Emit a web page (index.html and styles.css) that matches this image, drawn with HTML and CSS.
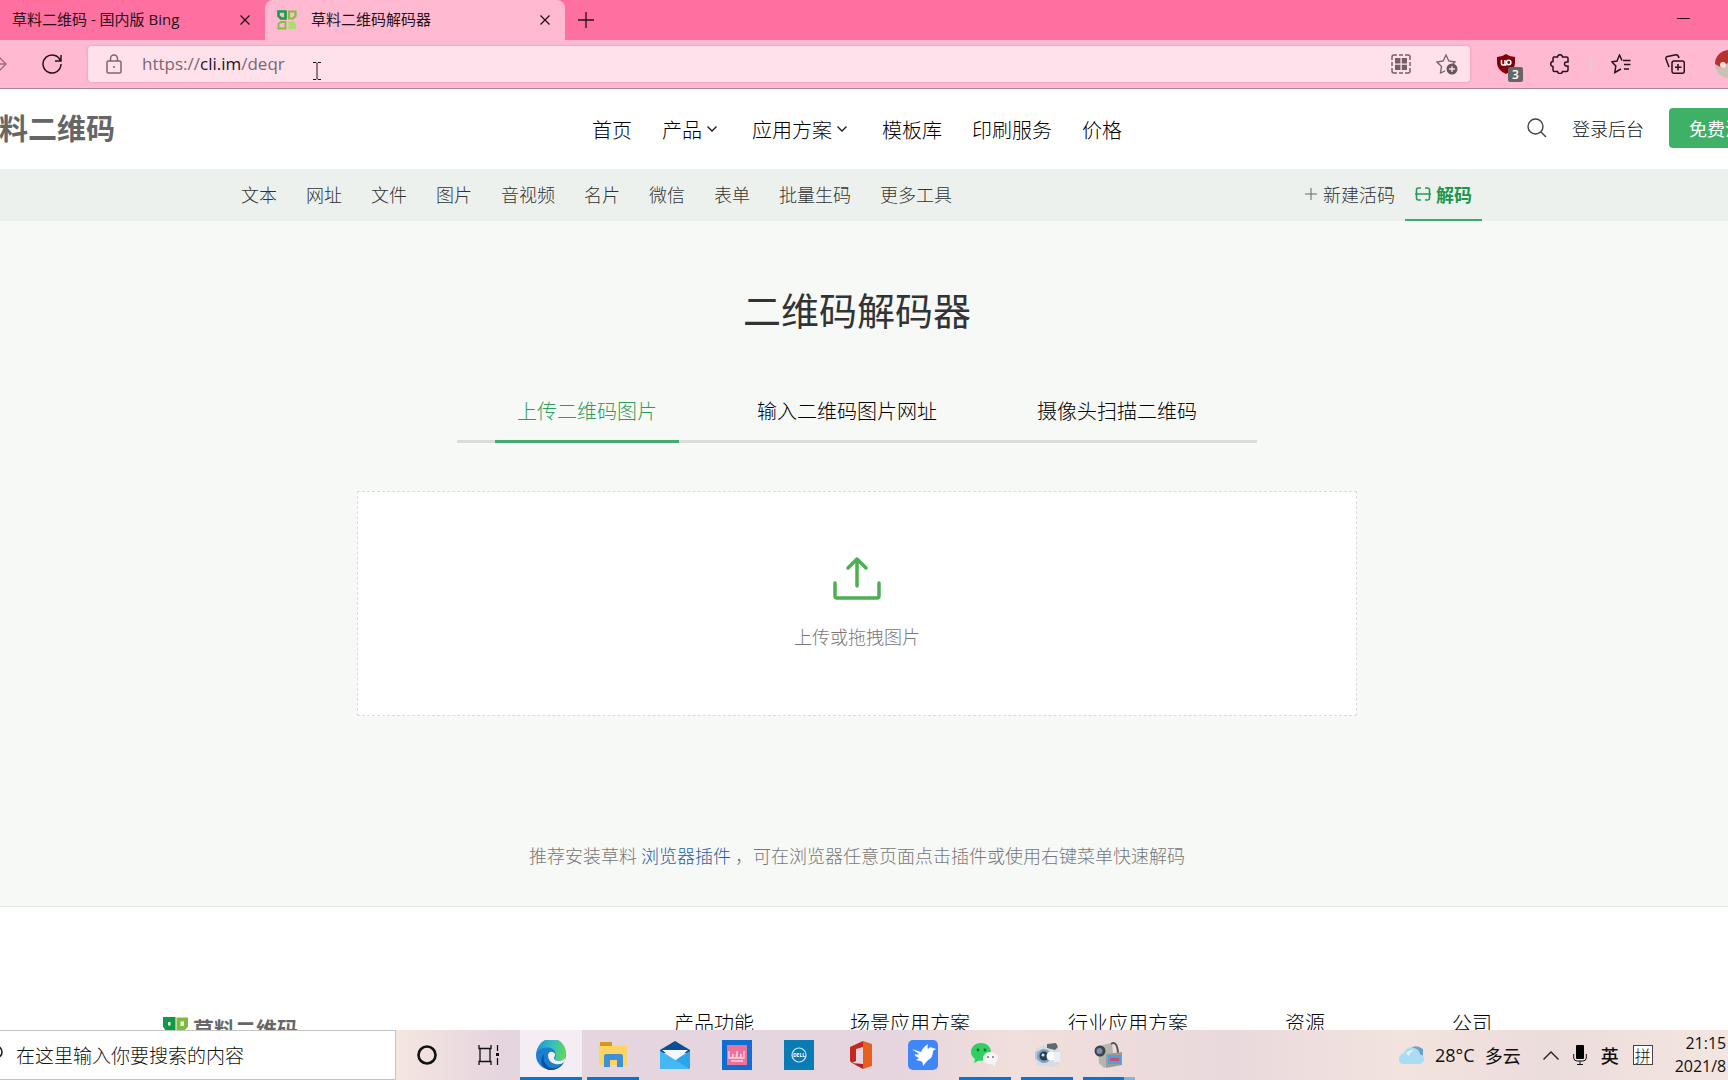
FILE: index.html
```
<!DOCTYPE html>
<html lang="zh-CN">
  <head>
    <meta charset="UTF-8" />
    <meta name="viewport" content="width=device-width, initial-scale=1.0" />
    <title>草料二维码解码器</title>
    <link rel="stylesheet" href="styles.css">
  </head>
  <body>
    <div class="tab-strip">
      <div class="tab">
        <span class="tab-title">草料二维码 - 国内版 Bing</span>
        <button class="icon-button tab-close" aria-label="关闭">
          <svg width="10" height="10" viewBox="0 0 10 10" stroke-width="1.300"><path d="M0.5 0.5L9.5 9.5M9.5 0.5L0.5 9.5" /></svg>
        </button>
      </div>
      <div class="tab active">
        <svg class="favicon" width="20" height="20" viewBox="0 0 20 20">
          <path d="M1.5 1.5H8.5V8.5H4L1.500 6Z" stroke="#149c46" stroke-width="2.600" />
          <path d="M12 1.500H18.500V6L16 8.500H12Z" stroke="#7fc241" stroke-width="2.200" />
          <path d="M4 12H8.500V18.500H1.500V14Z" stroke="#7fc241" stroke-width="1.800" />
          <path d="M11.500 11.500H17L19 14V19H11.500Z" fill="#a6e06a" stroke="none" />
        </svg>
        <span class="tab-title">草料二维码解码器</span>
        <button class="icon-button tab-close" aria-label="关闭">
          <svg width="10" height="10" viewBox="0 0 10 10" stroke-width="1.300"><path d="M0.5 0.5L9.5 9.5M9.5 0.5L0.5 9.5" /></svg>
        </button>
      </div>
      <button class="icon-button new-tab" aria-label="新建标签页">
        <svg width="18" height="18" viewBox="0 0 18 18" stroke-width="1.300"><path d="M9 1V17M1 9H17" /></svg>
      </button>
      <button class="icon-button minimize" aria-label="最小化">
        <svg width="14" height="14" viewBox="0 0 14 14"><path d="M0 7.500H13" /></svg>
      </button>
    </div>

    <div class="toolbar">
      <button class="icon-button forward" aria-label="前进">
        <svg width="20" height="20" viewBox="0 0 20 20" stroke="#a06a80" stroke-width="1.300"><path d="M1 10H18M11 3L18 10L11 17" /></svg>
      </button>
      <button class="icon-button reload" aria-label="刷新">
        <svg width="22" height="22" viewBox="0 0 22 22" stroke-width="1.500"><path d="M19.500 8A9 9 0 1 0 20 11M20 2V8H14" /></svg>
      </button>
      <div class="address-bar">
        <svg width="18" height="20" viewBox="0 0 18 20" stroke="#7d6670" stroke-width="1.500">
          <rect x="2" y="7" width="14" height="12" rx="1.500" />
          <path d="M5.500 7V4.500A3.500 3.500 0 0 1 12.500 4.500V7" />
          <circle cx="9" cy="13" r="1" fill="#7d6670" stroke="none" />
        </svg>
        <span class="url">https://<b>cli.im</b>/deqr</span>
        <button class="icon-button" aria-label="生成二维码">
          <svg width="20" height="20" viewBox="0 0 20 20" stroke="#756068" stroke-width="1.500">
            <path d="M1 6V3Q1 1 3 1H6M8 1H12M14 1H17Q19 1 19 3V6M19 8V12M19 14V17Q19 19 17 19H14M12 19H8M6 19H3Q1 19 1 17V14M1 12V8" />
            <path d="M4 4H9.400V9.400H4ZM10.800 4H16V9.400H10.800ZM4 10.800H9.400V16H4ZM10.800 10.800H16V16H10.800Z" fill="#756068" stroke="none" />
          </svg>
        </button>
        <button class="icon-button" aria-label="添加到收藏夹">
          <svg width="22" height="22" viewBox="0 0 22 22" stroke="#756068" stroke-width="1.300">
            <path d="M9 18L4.500 20L5.500 13.500L1 9L7.200 8L10 2L12.800 8L19 9L17 11" />
            <circle cx="16" cy="16" r="5.500" fill="#65555c" stroke="none" />
            <path d="M16 13V19M13 16H19" stroke="#ffe1eb" />
          </svg>
        </button>
      </div>
      <div class="extensions">
        <button class="icon-button ublock" aria-label="uBlock">
          <svg width="18" height="20" viewBox="0 0 18 20">
            <path d="M9 0Q13 3 18 3V9Q18 16 9 20Q0 16 0 9V3Q5 3 9 0Z" fill="#80000b" stroke="none" />
            <path d="M4.500 6V9.500Q4.500 11 6 11H8V6M8 11H9.500" stroke="#fff" stroke-width="1.500" />
            <circle cx="11.700" cy="8.500" r="2.200" stroke="#fff" stroke-width="1.500" />
          </svg>
          <span class="badge">3</span>
        </button>
        <button class="icon-button" aria-label="扩展">
          <svg width="20" height="20" viewBox="0 0 20 20" stroke-width="1.500">
            <path d="M4 3H7.500Q7.500 0.700 10 0.700T12.500 3H16.500Q18 3 18 4.500V8Q14.500 7.500 14.500 10T18 12V16Q18 17.500 16.500 17.500H12.500Q12.500 19.500 10 19.500T7.500 17.500H4.500Q3 17.500 3 16V12.500Q0.700 12.500 0.700 10T3 7.500V4.500Q3 3 4 3Z" />
          </svg>
        </button>
        <span class="divider"></span>
        <button class="icon-button" aria-label="收藏夹">
          <svg width="20" height="20" viewBox="0 0 20 20" stroke-width="1.500">
            <path d="M13 15H18M13 10.500H19.500M12 6.500H19.500M11 6.500L8.500 1L6 7L0.800 7.800L4.800 12L3.800 18.500L10 15" />
          </svg>
        </button>
        <button class="icon-button" aria-label="集锦">
          <svg width="20" height="20" viewBox="0 0 20 20" stroke-width="1.500">
            <rect x="7" y="7" width="12.300" height="12.300" rx="2" />
            <path d="M13 10V16.500M10 13.200H16.500M4 13L1 5Q0.500 3 2.500 2.500L11 0.800Q13 0.500 14 4" />
          </svg>
        </button>
        <button class="icon-button" aria-label="个人资料">
          <svg width="28" height="28" viewBox="0 0 28 28" stroke="none">
            <circle cx="14" cy="14" r="14" fill="#c9c1b5" />
            <path d="M0 14A14 14 0 0 1 14 0V12L7 18Z" fill="#b5322f" />
            <circle cx="8" cy="15" r="3" fill="#f5dfd5" />
          </svg>
        </button>
      </div>
      <svg class="text-cursor" width="8" height="18" viewBox="0 0 8 18"><path d="M0 0.500H3L4 1.500L5 0.500H8M4 1.500V16.500M0 17.500H3L4 16.500L5 17.500H8" /></svg>
    </div>

    <div class="page">
      <header class="site-header">
        <div class="logo">
          <svg width="34" height="34" viewBox="0 0 20 20">
            <path d="M1.500 1.500H8.500V8.500H1.500Z" stroke="#149c46" stroke-width="2.600" />
            <path d="M12 1.500H18.500V8.500H12ZM1.500 12H8.500V18.500H1.500Z" stroke="#7fc241" stroke-width="2.200" />
          </svg>
          <span>草料二维码</span>
        </div>
        <nav class="main-nav">
          <a href="#">首页</a>
          <a href="#">产品<svg width="10" height="6" viewBox="0 0 10 6" stroke-width="1.300"><path d="M0.500 0.500L5 5L9.500 0.500" /></svg></a>
          <a href="#">应用方案<svg width="10" height="6" viewBox="0 0 10 6" stroke-width="1.300"><path d="M0.500 0.500L5 5L9.500 0.500" /></svg></a>
          <a href="#">模板库</a>
          <a href="#">印刷服务</a>
          <a href="#">价格</a>
        </nav>
        <div class="account">
          <button class="icon-button" aria-label="搜索">
            <svg width="20" height="20" viewBox="0 0 20 20" stroke="#444" stroke-width="1.400"><circle cx="8.500" cy="8.500" r="7.500" /><path d="M14 14L19 19" /></svg>
          </button>
          <a href="#">登录后台</a>
          <button class="register">免费注册</button>
        </div>
      </header>

      <div class="tool-bar">
        <div class="tool-inner">
          <nav class="tool-nav">
            <a href="#">文本</a>
            <a href="#">网址</a>
            <a href="#">文件</a>
            <a href="#">图片</a>
            <a href="#">音视频</a>
            <a href="#">名片</a>
            <a href="#">微信</a>
            <a href="#">表单</a>
            <a href="#">批量生码</a>
            <a href="#">更多工具</a>
          </nav>
          <div class="tool-actions">
            <a href="#" class="new-code">
              <svg width="12" height="12" viewBox="0 0 12 12" stroke="#666"><path d="M6 0V12M0 6H12" /></svg>
              新建活码
            </a>
            <a href="#" class="decode">
              <svg width="16" height="14" viewBox="0 0 16 14" stroke="#279a55" stroke-width="1.600">
                <path d="M6 1H3.500Q1.500 1 1.500 3V5M10 1H12.500Q14.500 1 14.500 3V5M1.500 5V11Q1.500 13 3.500 13H6M14.500 5V11Q14.500 13 12.500 13H10M0 7H16" />
              </svg>
              解码
            </a>
          </div>
        </div>
      </div>

      <main class="decoder">
        <h1>二维码解码器</h1>
        <div class="mode-tabs">
          <button class="mode selected">上传二维码图片</button>
          <button class="mode">输入二维码图片网址</button>
          <button class="mode">摄像头扫描二维码</button>
        </div>
        <button class="upload">
          <svg width="48" height="44" viewBox="0 0 48 44" stroke="#4caf50" stroke-width="3.500">
            <path d="M2 27V40Q2 42 4 42H44Q46 42 46 40V27M24 30V3M15 12L24 3L33 12" stroke-linecap="round" stroke-linejoin="round" />
          </svg>
          <span>上传或拖拽图片</span>
        </button>
        <p class="hint">推荐安装草料 <a href="#">浏览器插件</a> ，可在浏览器任意页面点击插件或使用右键菜单快速解码</p>
      </main>

      <footer class="site-footer">
        <div class="footer-inner">
          <div class="footer-logo">
            <svg width="26" height="26" viewBox="0 0 26 26">
              <path d="M2.500 2.500H10V11H4L2.500 9Z" stroke="#0f9b45" stroke-width="5" />
              <path d="M15.500 2.500H23V9L21 11H15.500Z" stroke="#7dbb3c" stroke-width="4" />
            </svg>
            <span>草料二维码</span>
          </div>
          <span>产品功能</span>
          <span>场景应用方案</span>
          <span>行业应用方案</span>
          <span>资源</span>
          <span>公司</span>
        </div>
      </footer>
    </div>

    <div class="taskbar">
      <div class="search-box">
        <svg width="18" height="22" viewBox="0 0 18 22" stroke="#222" stroke-width="1.600"><circle cx="10" cy="8" r="6" /><path d="M6 12L1 18" /></svg>
        <input type="text" aria-label="搜索" placeholder="在这里输入你要搜索的内容" />
      </div>
      <button class="task" aria-label="Cortana">
        <svg width="22" height="22" viewBox="0 0 22 22" stroke="#111" stroke-width="2.600"><circle cx="11" cy="11" r="8.500" /></svg>
      </button>
      <button class="task" aria-label="任务视图">
        <svg width="22" height="20" viewBox="0 0 22 20" stroke="#111" stroke-width="1.300"><path d="M1 0V3.500H13V0M1 20V16.500H13V20M2 3.500V16.500M12 3.500V16.500M19.500 0V6M19.500 13V20" /><path d="M18 8H21V11H18Z" fill="#111" stroke="none" /></svg>
      </button>
      <button class="task current" aria-label="Edge">
        <svg width="30" height="30" viewBox="0 0 30 30" stroke="none">
          <defs>
            <linearGradient id="edge-top" x1="0" y1="0.300" x2="1" y2="0.500">
              <stop offset="0" stop-color="#2295cf" />
              <stop offset="0.500" stop-color="#34bfc4" />
              <stop offset="1" stop-color="#62d858" />
            </linearGradient>
          </defs>
          <circle cx="15" cy="15" r="15" fill="#1a7fd0" />
          <path d="M8 14Q6 23 13 27Q20 31 28 22A15 15 0 0 1 12 29.700Q1 24 8 14Z" fill="#0d4f98" />
          <path d="M1 12A14.500 14.500 0 0 1 30 14Q30 21 23 21L19 20Q22 9 13 7.500Q5 7 1 12Z" fill="url(#edge-top)" />
          <path d="M12 15Q13 11 16.500 12Q20 13 19 16Q17 18 19 20Q22 22 27 20L30 17L28.500 22Q25 25 19 24Q12 22 12 15Z" fill="#f4eef4" />
        </svg>
      </button>
      <button class="task running" aria-label="文件资源管理器">
        <svg width="28" height="26" viewBox="0 0 28 26" stroke="none">
          <path d="M0 3H12L14 4H28V23H0Z" fill="#fcd462" />
          <path d="M1 0H13V4H1Z" fill="#d79a16" />
          <path d="M5 14Q5 12 7 12H22Q24 12 24 14V25H18V18H11V25H5Z" fill="#3f90d6" />
        </svg>
      </button>
      <button class="task" aria-label="邮件">
        <svg width="30" height="28" viewBox="0 0 30 28" stroke="none">
          <path d="M0 9L15 0L30 9V12H0Z" fill="#0a4f96" />
          <path d="M3 9H27L15 21Z" fill="#f5f7fa" />
          <path d="M0 10L15 19L30 10V28H0Z" fill="#2ba5ea" />
          <path d="M2 9H28L16 19Z" fill="#f5f7fa" />
          <path d="M0 10L15 19L30 28H0Z" fill="#45b8f3" />
        </svg>
      </button>
      <button class="task" aria-label="应用">
        <svg width="30" height="30" viewBox="0 0 30 30" stroke="none">
          <path d="M0 0H30V30H0Z" fill="#0e6fd0" />
          <path d="M5 5H25V25H5Z" fill="#ee6f9a" />
          <path d="M7 11V18H10L11 14V18H14L15 11V18H18L19 14V18H22V11M9 21H21" stroke="#ffd3e0" stroke-width="1.300" />
        </svg>
      </button>
      <button class="task" aria-label="Dell">
        <svg width="30" height="30" viewBox="0 0 30 30" stroke="none">
          <path d="M0 0H30V30H0Z" fill="#0a7bb5" />
          <circle cx="15" cy="15" r="7" stroke="#d5eaf5" stroke-width="1.200" />
          <text class="dell-name" x="15" y="17" text-anchor="middle">DELL</text>
        </svg>
      </button>
      <button class="task" aria-label="Office">
        <svg width="24" height="28" viewBox="0 0 24 28" stroke="none">
          <path d="M14 0L23 3V25L14 28Z" fill="#e8601f" />
          <path d="M14 0V6L7 8V20L3 22L1 20V6Z" fill="#c02a1e" />
          <path d="M3 22L14 23V28Z" fill="#b3202a" />
        </svg>
      </button>
      <button class="task" aria-label="飞鸟">
        <svg width="30" height="30" viewBox="0 0 30 30" stroke="none">
          <rect width="30" height="30" rx="5" fill="#3f86fa" />
          <path d="M4 9L13 12Q15 7 20 4Q19 8 20 9Q22 6 25 8L28 9L25 11Q25 18 20 20L15 26Q15 21 12 21L8 20Q10 19 11 18Q6 16 7 14Q10 15 11 14Z" fill="#fff" />
        </svg>
      </button>
      <button class="task running" aria-label="微信">
        <svg width="30" height="26" viewBox="0 0 30 26" stroke="none">
          <path d="M11 1C5 1 1 5 1 10Q1 14 5 17L4 21L9 18.500C16 20 21 15 21 10S17 1 11 1Z" fill="#2fcf62" />
          <circle cx="8" cy="8" r="1.400" fill="#176b33" /><circle cx="15" cy="8" r="1.400" fill="#176b33" />
          <path d="M20 10C16 10 13 13 13 16.500S17 23 22 22L25 24V21Q28 19 28 16C28 13 24 10 20 10Z" fill="#f5f5f5" />
          <circle cx="18" cy="15" r="1" fill="#777" /><circle cx="23" cy="15" r="1" fill="#777" />
        </svg>
      </button>
      <button class="task running" aria-label="照相机">
        <svg width="28" height="28" viewBox="0 0 28 28" stroke="none">
          <path d="M3 8L10 4H24L26 9V23L20 26L4 24Z" fill="#d3dce3" />
          <path d="M14 3L23 2L25 6L22 9L14 7Z" fill="#60686f" />
          <path d="M2 11L5 9V20L2 18Z" fill="#b7c7d6" />
          <circle cx="11" cy="15" r="7" fill="#7f9fc0" /><circle cx="11" cy="15" r="4.500" fill="#2c3e52" />
          <circle cx="10" cy="14" r="1.500" fill="#dce9f5" />
          <circle cx="18" cy="15" r="4.500" fill="#fff" />
          <path d="M21 11H27V21H21Z" fill="#edf0f2" />
        </svg>
      </button>
      <button class="task running stacked" aria-label="摄像机">
        <svg width="30" height="28" viewBox="0 0 30 28" stroke="none">
          <path d="M4 5L18 2L20 22L10 27L5 22Z" fill="#b5b5b0" />
          <path d="M17 3Q23-1 24 12" stroke="#565656" stroke-width="2" />
          <path d="M12 13L28 11V24L12 27Z" fill="#9c9c97" />
          <circle cx="6" cy="10" r="5.500" fill="#404348" /><circle cx="5.500" cy="10" r="3" fill="#7592b5" />
          <path d="M14 14H27V23H14Z" fill="#4d9fe0" />
          <path d="M16 17H25V20H16Z" fill="#c9506e" />
        </svg>
      </button>

      <div class="tray">
        <div class="weather">
          <svg width="27" height="20" viewBox="0 0 27 20" stroke="none">
            <path d="M13 3Q18-1 25 4V14H15Z" fill="#6c9fcb" />
            <path d="M6 19Q0 19 1 13Q2 9 6 8Q9 1 16 3Q21 4 22 9Q27 11 26 15Q25 19 21 19Z" fill="#a9dcf5" />
            <path d="M8 8Q12 4 17 6Q12 6 11 11Z" fill="#e1f4fc" />
          </svg>
          <span>28°C</span>
          <span>多云</span>
        </div>
        <svg width="16" height="9" viewBox="0 0 16 9" stroke="#222" stroke-width="1.400"><path d="M0.500 8.500L8 1L15.500 8.500" /></svg>
        <svg width="14" height="20" viewBox="0 0 14 20" stroke="#111"><rect x="3" y="0" width="8" height="14" rx="1" fill="#000" stroke="none" /><path d="M0.700 9V13Q1 16 4 16H10Q13 16 13.300 13V9M7 16V19.500M4 19.500H10" /></svg>
        <span class="ime-lang">英</span>
        <span class="ime-mode">拼</span>
        <div class="clock">
          <span>21:15</span>
          <span>2021/8</span>
        </div>
      </div>
    </div>
  </body>
</html>
```
FILE: styles.css
```
* {
  box-sizing: border-box;
}
body {
  margin: 0;
  height: 100vh;
  display: flex;
  flex-direction: column;
  overflow: hidden;
  font-family: "Noto Sans CJK SC", sans-serif;
  font-weight: 300;
  font-size: 18px;
  color: #333;
  background-color: #fff;
  /* defaults for the inline icons */
  fill: none;
  stroke: #24121a;
}
a {
  color: inherit;
  text-decoration: none;
}
svg {
  display: block;
  flex: none;
}
button {
  font: inherit;
  color: inherit;
  padding: 0;
  border: none;
  background: none;
  cursor: pointer;
}
.icon-button {
  display: flex;
  align-items: center;
  justify-content: center;
}

/* browser tabs */
.tab-strip {
  flex: none;
  display: flex;
  height: 40px;
  background-color: #fe709f;
}
.tab {
  display: flex;
  align-items: center;
  width: 265px;
  padding: 0 10px 0 12px;
  font-family: "Open Sans", "Noto Sans CJK SC", sans-serif;
  font-size: 15px;
  font-weight: 400;
  color: #24121a;
}
.tab-title {
  padding-bottom: 3px;
}
.tab.active {
  width: 300px;
  background-color: #ffb9d1;
  border-radius: 8px 8px 0 0;
}
.favicon {
  margin-right: 14px;
}
.tab-close {
  width: 20px;
  height: 20px;
  margin-left: auto;
}
.new-tab {
  width: 42px;
}
.minimize {
  width: 60px;
  margin: 0 14px 4px auto;
}

/* address row */
.toolbar {
  flex: none;
  position: relative;
  display: flex;
  align-items: center;
  height: 49px;
  padding-bottom: 1px;
  background-color: #ffb9d1;
  border-bottom: 1px solid #ab8594;
}
.forward {
  width: 20px;
  margin-left: -12px;
}
.reload {
  width: 44px;
  margin: 0 14px 0 22px;
}
.address-bar {
  flex: 1;
  display: flex;
  align-items: center;
  gap: 25px;
  height: 36px;
  padding: 0 12px 0 17px;
  background-color: #ffe1eb;
  border-radius: 4px;
  box-shadow: 0 0 3px #d999b0;
}
.url {
  flex: 1;
  margin-left: -6px;
  font-family: "Open Sans", sans-serif;
  font-size: 17px;
  font-weight: 400;
  color: #7d6670;
}
.url b {
  font-weight: 400;
  color: #24121a;
}
.extensions {
  display: flex;
  align-items: center;
  width: 258px;
  padding-left: 9px;
}
.extensions .icon-button {
  flex: none;
  width: 54px;
  height: 36px;
}
.divider {
  flex: none;
  width: 1px;
  height: 18px;
  margin: 0 3px;
  background-color: #e3cfd8;
}
.ublock {
  position: relative;
}
.badge {
  position: absolute;
  right: 10px;
  bottom: 0;
  width: 15px;
  height: 15px;
  font-family: "Open Sans", sans-serif;
  font-size: 12px;
  font-weight: 600;
  line-height: 15px;
  color: #fff;
  background-color: #666;
  border-radius: 2px;
}
.text-cursor {
  position: absolute;
  left: 313px;
  top: 22px;
}

/* web page */
.page {
  flex: 1;
  min-height: 0;
  overflow: hidden;
}
.site-header {
  display: grid;
  grid-template-columns: 1fr auto 1fr;
  align-items: center;
  height: 80px;
  margin: 0 -56px 0 -70px;
}
.logo {
  display: flex;
  align-items: center;
  gap: 6px;
  padding-bottom: 4px;
  font-size: 29px;
  font-weight: 700;
  color: #666;
}
.main-nav {
  display: flex;
  gap: 30px;
  font-size: 20px;
  color: #000;
}
.main-nav a {
  display: flex;
  align-items: center;
}
.main-nav svg {
  margin: 0 5px;
}
.account {
  display: flex;
  align-items: center;
  justify-content: flex-end;
  gap: 25px;
  padding-bottom: 2px;
  color: #111;
}
.register {
  width: 115px;
  height: 40px;
  padding-left: 20px;
  font-weight: 400;
  text-align: left;
  color: #fff;
  background-color: #3eb166;
  border-radius: 4px;
}
.tool-bar {
  height: 52px;
  padding-right: 14px;
  background-color: #edf1ee;
}
.tool-inner {
  display: flex;
  justify-content: space-between;
  max-width: 1250px;
  height: 100%;
  margin: 0 auto;
  padding-left: 9px;
  color: #333;
}
.tool-nav,
.tool-actions {
  display: flex;
  align-items: center;
  gap: 29px;
  padding-bottom: 2px;
}
.tool-actions {
  gap: 10px;
  padding-bottom: 0;
}
.new-code,
.decode {
  display: flex;
  align-items: center;
  gap: 6px;
  height: 100%;
  padding-bottom: 2px;
}
.decode {
  gap: 5px;
  padding: 0 10px;
  font-weight: 700;
  color: #1f9650;
  border-bottom: 2px solid #3dab69;
}
.decoder {
  display: flex;
  flex-direction: column;
  align-items: center;
  padding: 63px 14px 39px 0;
  background-color: #f7f9f7;
  border-bottom: 1px solid #e6e6e6;
}
h1 {
  margin: 0 0 63px;
  font-size: 38px;
  font-weight: 400;
  line-height: 50px;
}
.mode-tabs {
  display: flex;
  justify-content: space-between;
  width: 100%;
  max-width: 800px;
  padding: 0 38px;
  border-bottom: 3px solid #d9dddb;
}
.mode {
  margin-bottom: -3px;
  padding: 0 22px 15px;
  font-size: 20px;
  line-height: 28px;
  color: #000;
  border-bottom: 3px solid transparent;
}
.mode.selected {
  color: #2f9c5b;
  border-color: #45ab72;
}
.upload {
  display: flex;
  flex-direction: column;
  align-items: center;
  gap: 24px;
  width: 100%;
  max-width: 1000px;
  margin-top: 48px;
  padding: 64px 0 67px;
  line-height: 24px;
  color: #777;
  background-color: #fff;
  border: 1px dashed #d9dedb;
}
.hint {
  margin: 127px 0 0;
  line-height: 24px;
  color: #777;
}
.hint a {
  color: #1d5fa3;
}
.site-footer {
  padding: 102px 14px 0 0;
}
.footer-inner {
  display: grid;
  grid-template-columns: 511fr 176fr 218fr 217fr 167fr 99fr;
  max-width: 1388px;
  margin: 0 auto;
  font-size: 20px;
  line-height: 28px;
  color: #000;
}
.footer-logo {
  display: flex;
  gap: 4px;
  padding-top: 8px;
  font-size: 21px;
  font-weight: 700;
  line-height: 22px;
  color: #666;
}

/* windows taskbar */
.taskbar {
  flex: none;
  display: flex;
  height: 50px;
  background: linear-gradient(90deg, #f5e6e0 396px, #e5d5df 500px, #e6d5de 900px, #f1dfdc 1010px, #ead9dc 1230px, #f2e3de 1400px, #ecdddd 1550px, #f3e5df);
}
.search-box {
  display: flex;
  align-items: center;
  gap: 12px;
  width: 396px;
  padding-right: 10px;
  background-color: #fff;
  border: 1px solid #c4c4c4;
  border-left: none;
}
.search-box svg {
  margin-left: -14px;
}
.search-box input {
  flex: 1;
  padding: 0 0 2px;
  font: inherit;
  font-size: 19px;
  border: none;
  outline: none;
}
.search-box input::placeholder {
  color: #111;
}
.task {
  display: flex;
  align-items: center;
  justify-content: center;
  width: 62px;
  border-top: 3px solid transparent;
  border-bottom: 3px solid transparent;
}
.task.current {
  background-color: #f4eef4;
  border-color: #f4eef4 transparent #0f73cc;
}
.task.running {
  width: 52px;
  margin: 0 5px;
  border-bottom-color: #0f73cc;
}
.task.stacked {
  border-image: linear-gradient(90deg, #0f73cc 41px, #86b4dc 41px) 0 0 3;
}
.dell-name {
  font-family: "Open Sans", sans-serif;
  font-size: 5px;
  font-weight: 700;
  fill: #fff;
}
.tray {
  display: flex;
  align-items: center;
  gap: 14px;
  width: 330px;
  margin-left: auto;
  color: #111;
  white-space: nowrap;
}
.weather {
  display: flex;
  align-items: center;
  gap: 10px;
  margin-right: 8px;
}
.weather span,
.clock {
  font-family: "Open Sans", "Noto Sans CJK SC", sans-serif;
  font-weight: 400;
}
.ime-lang {
  font-weight: 500;
}
.ime-mode {
  width: 20px;
  font-size: 16px;
  line-height: 18px;
  text-align: center;
  background-color: #fff;
  border: 1px solid #444;
}
.clock {
  display: flex;
  flex-direction: column;
  align-items: flex-end;
  margin-left: 8px;
  font-size: 16px;
  line-height: 23px;
}
```
